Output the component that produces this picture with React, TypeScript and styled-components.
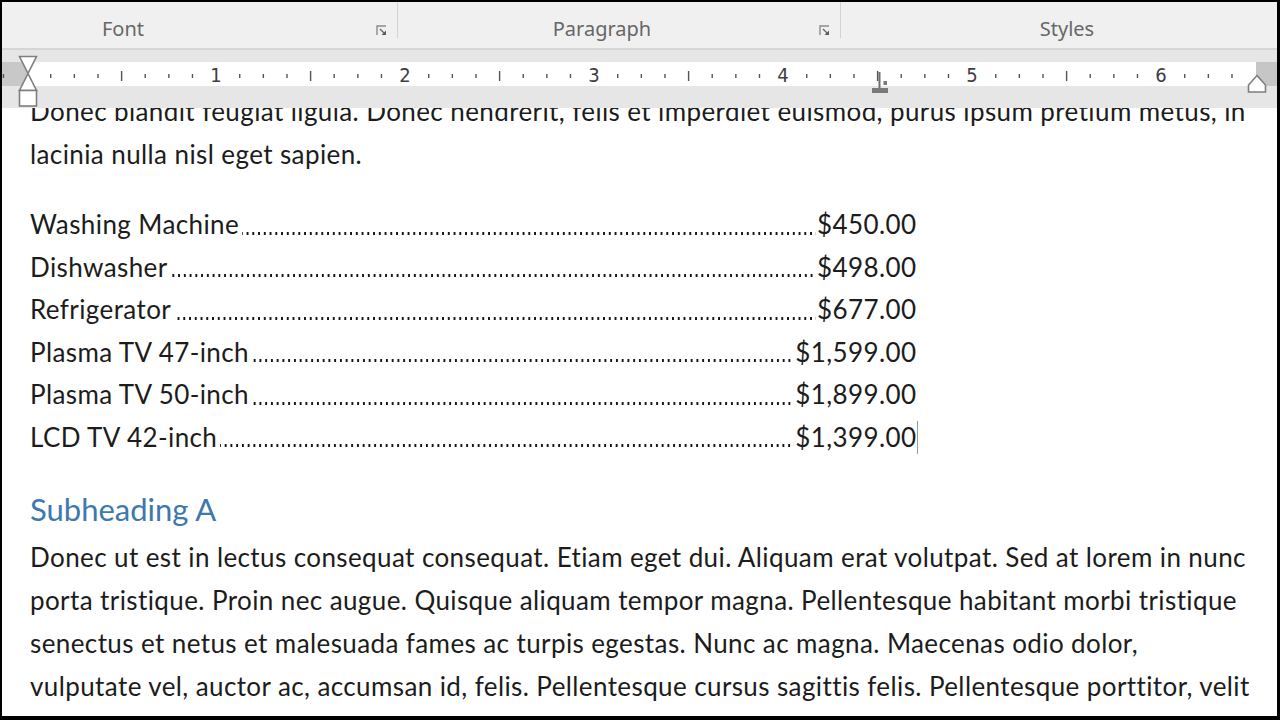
import styled, { createGlobalStyle } from "styled-components";

const GlobalStyle = createGlobalStyle`
    html, body {
        margin: 0;
        padding: 0;
        background: #000;
    }
`;

const INCH = 189;
const ZERO = 27;
const RIGHT_EDGE = 1256;

const items = [
    { name: "Washing Machine", price: "$450.00" },
    { name: "Dishwasher", price: "$498.00" },
    { name: "Refrigerator", price: "$677.00" },
    { name: "Plasma TV 47-inch", price: "$1,599.00" },
    { name: "Plasma TV 50-inch", price: "$1,899.00" },
    { name: "LCD TV 42-inch", price: "$1,399.00" },
];

const bodyLines = [
    "Donec ut est in lectus consequat consequat. Etiam eget dui. Aliquam erat volutpat. Sed at lorem in nunc",
    "porta tristique. Proin nec augue. Quisque aliquam tempor magna. Pellentesque habitant morbi tristique",
    "senectus et netus et malesuada fames ac turpis egestas. Nunc ac magna. Maecenas odio dolor,",
    "vulputate vel, auctor ac, accumsan id, felis. Pellentesque cursus sagittis felis. Pellentesque porttitor, velit",
];

const Launcher = () => (
    <LauncherIcon width="11" height="11" viewBox="0 0 11 11">
        <path d="M1 10 V1 H10" fill="none" stroke="#8a8a8a" strokeWidth="1.4" />
        <path d="M4 4 L9 9" stroke="#6a6a6a" strokeWidth="1.4" />
        <path d="M5.5 10 H10 V5.5 Z" fill="#5a5a5a" />
    </LauncherIcon>
);

const Ruler = () => {
    const ticks = [];
    for (let i = -1; i <= 52; i++) {
        const x = ZERO + (i * INCH) / 8 - 2;
        if (x + 2 > RIGHT_EDGE - 4) break;
        if (i === 0) continue;
        if (i % 8 === 0) {
            ticks.push(
                <text key={i} x={x} y={32} textAnchor="middle" fontSize="20" fill="#3e3e3e"
                    fontFamily="'Liberation Sans Narrow', 'DejaVu Sans Condensed', 'Liberation Sans', sans-serif">
                    {i / 8}
                </text>
            );
        } else if (i % 4 === 0) {
            ticks.push(<rect key={i} x={x - 0.6} y={21} width={1.4} height={10} fill="#555" />);
        } else {
            ticks.push(<rect key={i} x={x - 0.6} y={24} width={1.4} height={4} fill="#555" />);
        }
    }
    return (
        <RulerSvg width="1275" height="58" viewBox="0 0 1275 58">
            <rect x="0" y="12" width={ZERO - 2} height="24" fill="#c8c8c8" />
            <rect x={ZERO - 2} y="12" width={RIGHT_EDGE - ZERO} height="24" fill="#fff" />
            <rect x={RIGHT_EDGE - 2} y="12" width={1275 - RIGHT_EDGE + 2} height="24" fill="#c6c6c6" />
            {ticks}
            {/* left indent */}
            <path d="M17.5 6.5 H34.5 L26 23.5 L34.5 40.5 H17.5 L26 23.5 Z" fill="#fff" stroke="#7f7f7f" strokeWidth="1.6" />
            <rect x="17.5" y="40.5" width="17" height="15.5" fill="#fff" stroke="#7f7f7f" strokeWidth="1.6" />
            {/* decimal tab */}
            <rect x="876.5" y="22" width="2" height="17" fill="#6e6e6e" />
            <rect x="870" y="38" width="16" height="5" fill="#7a7a7a" />
            <rect x="881.5" y="31" width="3.5" height="4" fill="#7a7a7a" />
            {/* right indent */}
            <path d="M1255 25.5 L1246.5 35 V42 H1263.5 V35 Z" fill="#fff" stroke="#7f7f7f" strokeWidth="1.6" />
        </RulerSvg>
    );
};

const App = () => {
    return (
        <>
            <GlobalStyle />
            <Frame>
                <RibbonBar>
                    <Group $width={396} $pad={154}>
                        <GroupLabel>Font</GroupLabel>
                        <Launcher />
                    </Group>
                    <Group $width={443} $pad={35}>
                        <GroupLabel>Paragraph</GroupLabel>
                        <Launcher />
                    </Group>
                    <Group $width={436} $pad={-16} $last>
                        <GroupLabel>Styles</GroupLabel>
                    </Group>
                </RibbonBar>
                <RulerBand>
                    <Ruler />
                </RulerBand>
                <Page>
                    <Line $first>
                        Donec blandit feugiat ligula. Donec hendrerit, felis et imperdiet euismod, purus ipsum pretium metus, in
                    </Line>
                    <Line>lacinia nulla nisl eget sapien.</Line>
                    <TabList>
                        {items.map((item, i) => (
                            <TabRow key={item.name}>
                                <Label>{item.name}</Label>
                                <Leader />
                                <Price>{item.price}</Price>
                                {i === items.length - 1 && <Caret />}
                            </TabRow>
                        ))}
                    </TabList>
                    <Subheading>Subheading A</Subheading>
                    {bodyLines.map((l) => (
                        <BodyLine key={l}>{l}</BodyLine>
                    ))}
                </Page>
            </Frame>
        </>
    );
};

export default App;

const Frame = styled.div`
    width: 1280px;
    height: 720px;
    box-sizing: border-box;
    border-style: solid;
    border-color: #000;
    border-width: 2px 3px 4px 2px;
    background: #fff;
    display: flex;
    flex-direction: column;
    overflow: hidden;
`;

const RibbonBar = styled.div`
    height: 46px;
    flex: none;
    display: flex;
    background: #f0f0f0;
    border-bottom: 2px solid #d6d6d6;
`;

const Group = styled.div<{ $width: number; $pad: number; $last?: boolean }>`
    position: relative;
    width: ${({ $width }) => $width}px;
    flex: none;
    box-sizing: border-box;
    display: flex;
    justify-content: center;
    align-items: center;
    padding-right: ${({ $pad }) => Math.max($pad, 0)}px;
    padding-left: ${({ $pad }) => Math.max(-$pad, 0)}px;

    &::after {
        content: "";
        display: ${({ $last }) => ($last ? "none" : "block")};
        position: absolute;
        right: 0;
        top: 0;
        width: 1px;
        height: 36px;
        background: #d2d2d2;
    }
`;

const GroupLabel = styled.span`
    font-family: "Noto Sans", "Open Sans", sans-serif;
    font-size: 20px;
    color: #676767;
    padding-top: 6px;
`;

const LauncherIcon = styled.svg`
    position: absolute;
    right: 11px;
    top: 23px;
`;

const RulerBand = styled.div`
    height: 58px;
    flex: none;
    background: #e6e6e6;
    position: relative;
    z-index: 1;
`;

const RulerSvg = styled.svg`
    display: block;
`;

const Page = styled.div`
    flex: 1;
    overflow: hidden;
    padding-left: 28px;
    font-family: Lato, "Noto Sans", sans-serif;
    font-size: 26px;
    letter-spacing: 0.4px;
    font-variant-ligatures: none;
    color: #1c1c1c;
`;

const Line = styled.div<{ $first?: boolean }>`
    white-space: nowrap;
    line-height: 43px;
    margin-top: ${({ $first }) => ($first ? "-18px" : "0")};
`;

const TabList = styled.div`
    margin-top: 27px;
    width: 886px;
`;

const TabRow = styled.div`
    display: flex;
    align-items: stretch;
    line-height: 42.6px;
    white-space: nowrap;
`;

const Label = styled.span`
    flex: none;
    padding-right: 3px;
`;

const Leader = styled.span`
    flex: 1;
    min-width: 0;
    margin-right: 1px;
    background-image: linear-gradient(90deg, #161616 0 2.2px, transparent 2.2px 100%);
    background-size: 5.75px 2.8px;
    background-repeat: repeat-x;
    background-position: right 0 top 28.5px;
`;

const Price = styled.span`
    flex: none;
    margin-right: -0.4px;
`;

const Caret = styled.span`
    display: inline-block;
    align-self: center;
    width: 1px;
    height: 33px;
    margin-left: 1px;
    margin-right: -2px;
    background: #9a9a9a;
`;

const Subheading = styled.div`
    margin-top: 28px;
    margin-bottom: 5px;
    font-size: 31px;
    letter-spacing: 0;
    line-height: 44px;
    color: #3d78ae;
`;

const BodyLine = styled.div`
    white-space: nowrap;
    line-height: 43.3px;
`;
